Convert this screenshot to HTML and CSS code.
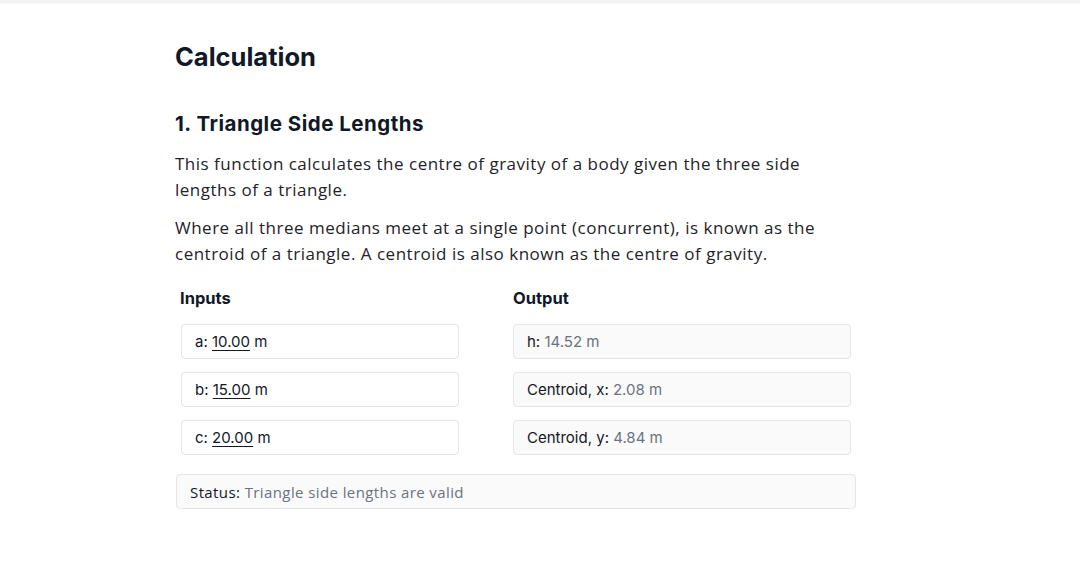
FILE: index.html
```html
<!DOCTYPE html>
<html>
    <head>
        <meta charset="UTF-8">
        <title>Calculation</title>
        <link rel="stylesheet" href="styles.css">
    </head>
    <body>
        <div class="topbar"></div>
        <div class="page">
            <h1 class="title">Calculation</h1>
            <h2 class="subtitle">1. Triangle Side Lengths</h2>
            <p class="text">This function calculates the centre of gravity of a body given the three side lengths of a triangle.</p>
            <p class="text">Where all three medians meet at a single point (concurrent), is known as the centroid of a triangle. A centroid is also known as the centre of gravity.</p>

            <div class="calc">
                <div class="col col-in">
                    <div class="col-title">Inputs</div>
                    <div class="field">a: <span class="num">10.00</span> m</div>
                    <div class="field">b: <span class="num">15.00</span> m</div>
                    <div class="field">c: <span class="num">20.00</span> m</div>
                </div>
                <div class="col col-out">
                    <div class="col-title">Output</div>
                    <div class="field out">h: <span class="val">14.52 m</span></div>
                    <div class="field out">Centroid, x: <span class="val">2.08 m</span></div>
                    <div class="field out">Centroid, y: <span class="val">4.84 m</span></div>
                </div>
            </div>

            <div class="status">Status: <span class="val">Triangle side lengths are valid</span></div>
        </div>
    </body>
</html>
```

FILE: styles.css
```css
*{
    padding:0;
    margin:0;
    box-sizing:border-box;
}
body{
    background:#fff;
    color:#111827;
    font-family:"Open Sans","Liberation Sans",sans-serif;
}
.topbar{
    height:3px;
    background:#f2f2f2;
}
.page{
    width:681px;
    margin-left:175px;
}
.title{
    margin-top:38px;
    font-family:"Inter",sans-serif;
    font-size:25.5px;
    line-height:32px;
    font-weight:700;
    color:#111827;
}
.subtitle{
    margin-top:38px;
    font-family:"Inter",sans-serif;
    font-size:20.5px;
    line-height:26px;
    font-weight:700;
    letter-spacing:0.5px;
    color:#111827;
}
.text{
    margin-top:14px;
    font-size:17px;
    line-height:25.5px;
    letter-spacing:0.5px;
    color:#1f2328;
}
.text + .text{
    margin-top:13px;
}
.calc{
    display:flex;
    margin-top:20px;
}
.col{
    padding-left:5px;
}
.col-in{
    width:333px;
}
.col-in .field{
    width:278px;
    margin-left:1px;
}
.col-out{
    flex:1;
    padding-right:5px;
}
.col-title{
    font-family:"Inter",sans-serif;
    font-size:16.5px;
    line-height:24px;
    font-weight:700;
    margin-bottom:14px;
}
.field{
    height:35px;
    border:1px solid #e6e6e6;
    border-radius:4px;
    padding:0 13px;
    display:flex;
    align-items:center;
    white-space:pre;
    font-family:"Inter",sans-serif;
    font-size:15px;
    color:#111827;
    margin-bottom:13px;
}
.num{
    text-decoration:underline;
    text-underline-offset:3px;
}
.out{
    background:#fafafa;
}
.val{
    color:#6b7280;
}
.status{
    margin-top:6px;
    margin-left:1px;
    height:35px;
    border:1px solid #e6e6e6;
    border-radius:4px;
    background:#fafafa;
    padding:0 13px;
    display:flex;
    align-items:center;
    white-space:pre;
    font-size:15px;
    letter-spacing:0.4px;
    color:#111827;
}
```
